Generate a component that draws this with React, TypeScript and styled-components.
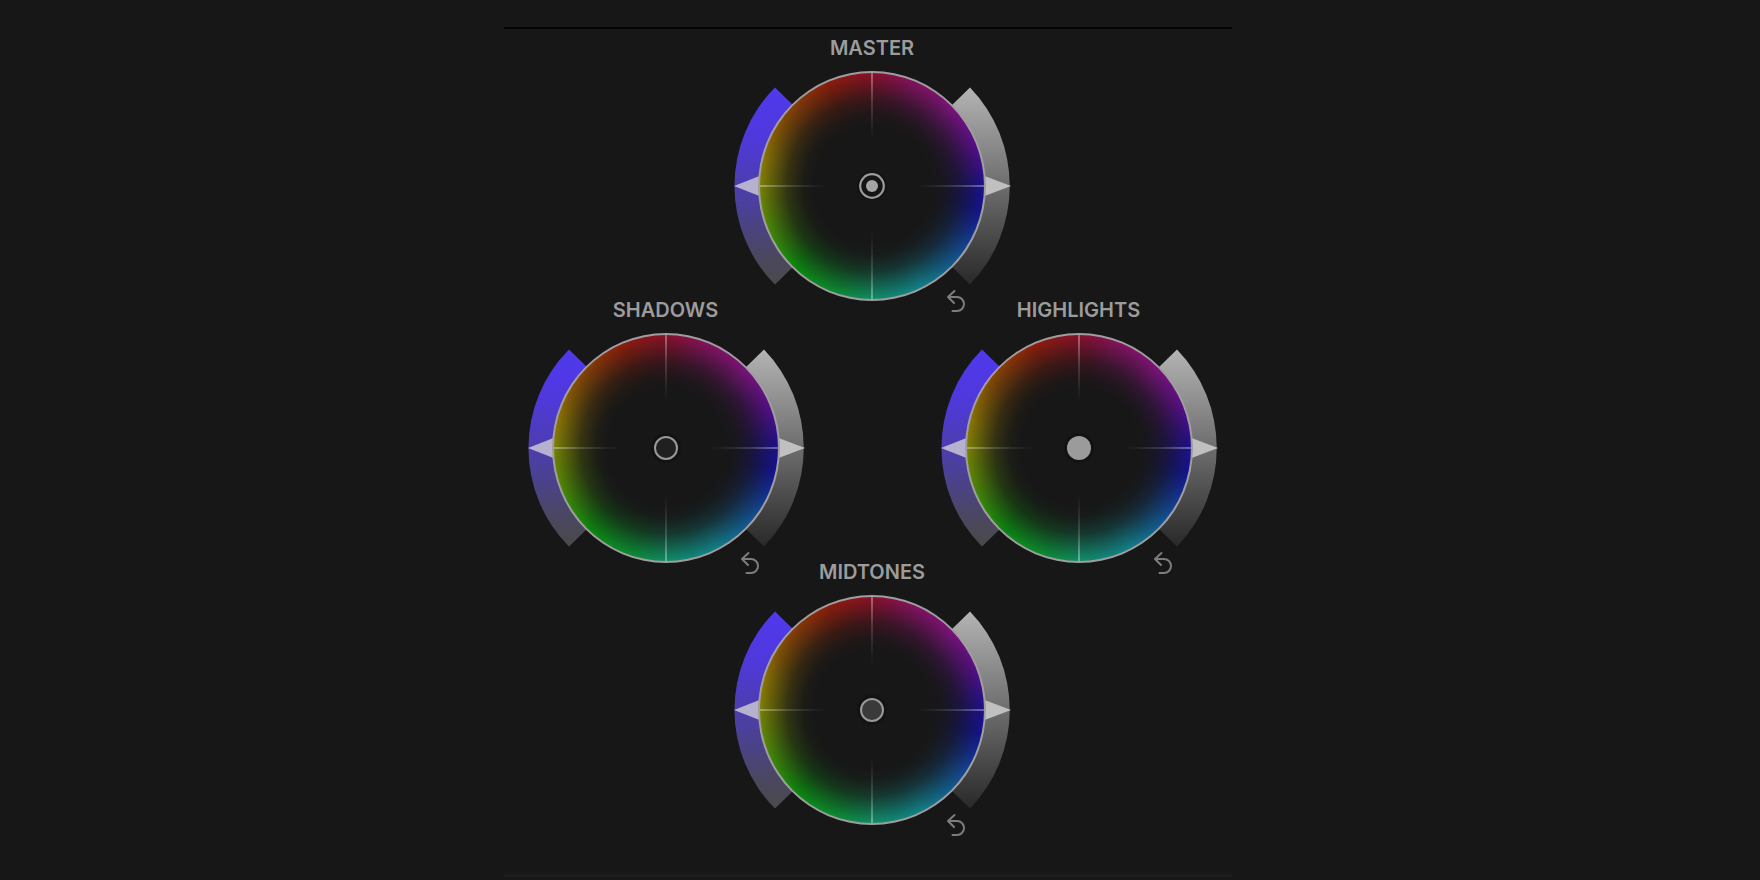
import React from 'react';
import styled, { createGlobalStyle } from 'styled-components';

type Marker = 'target' | 'ring' | 'filled' | 'mid';
type Area = 'master' | 'shadows' | 'highlights' | 'midtones';

const GlobalStyle = createGlobalStyle`
  * { box-sizing: border-box; }
  body {
    margin: 0;
    background: #171717;
    color: #9c9c9c;
    font-family: Inter, "Liberation Sans", sans-serif;
  }
`;

const Page = styled.main`
  display: flex;
  justify-content: center;
  min-height: 100vh;
  padding: 27px 24px 3px 0;
`;

const Panel = styled.div`
  display: flex;
  flex-direction: column;
  width: 100%;
  max-width: 728px;
  border-top: 2px solid #050505;
  border-bottom: 3px solid #1d1d1d;
`;

const WheelGrid = styled.div`
  display: grid;
  grid-template-columns: repeat(4, 1fr);
  grid-auto-rows: 262px;
  grid-template-areas:
    '. master master .'
    'shadows shadows highlights highlights'
    '. midtones midtones .';
  margin: 0 -53px 0 -45px;
  padding-top: 8px;
`;

const WheelCard = styled.section<{ $area: Area }>`
  grid-area: ${({ $area }) => $area};
  display: flex;
  flex-direction: column;
  align-items: center;
`;

const WheelTitle = styled.h2`
  margin: 0;
  font-size: 20px;
  font-weight: 600;
  line-height: 22px;
`;

const WheelBody = styled.div`
  position: relative;
  flex: none;
  width: 280px;
  height: 236px;
  margin-top: 10px;
`;

const HueDisc = styled.div`
  position: absolute;
  inset: 2px 26px 4px;
  border: 2px solid #a09d9e;
  border-radius: 50%;
  background:
    radial-gradient(closest-side, #171717 52%, rgba(23, 23, 23, 0.95) 62%, rgba(23, 23, 23, 0.74) 76%, rgba(23, 23, 23, 0.42) 88%, rgba(23, 23, 23, 0.1) 100%),
    conic-gradient(#95102b 0deg, #8f1163 20deg, #861288 46deg, #5e0e95 68deg, #210f98 88deg, #12129c 102deg, #1250a0 126deg, #118b97 153deg, #109b74 178deg, #0a9938 198deg, #0b950d 223deg, #5b9305 252deg, #8b8b02 272deg, #978002 284deg, #914f03 308deg, #9a1d0b 337deg, #95102b 360deg);
`;

const Overlay = styled.svg`
  position: absolute;
  inset: 0;
  width: 100%;
  height: 100%;
`;

const ResetButton = styled.button`
  position: absolute;
  right: 44px;
  bottom: -8px;
  display: flex;
  padding: 0;
  border: 0;
  background: none;
  color: #7d7d7d;
  cursor: pointer;
`;

function MarkerShape({ kind }: { kind: Marker }) {
  return (
    <g>
      <circle cx="140" cy="117" r="15" fill="#111" opacity="0.7" />
      {kind === 'target' && (
        <>
          <circle cx="140" cy="117" r="11.8" fill="#141414" stroke="#9c9c9c" strokeWidth="2.2" />
          <circle cx="140" cy="117" r="6" fill="#a5a5a5" />
        </>
      )}
      {kind === 'ring' && <circle cx="140" cy="117" r="11" fill="#202020" stroke="#999" strokeWidth="2" />}
      {kind === 'mid' && <circle cx="140" cy="117" r="11" fill="#3a3a3a" stroke="#999" strokeWidth="2" />}
      {kind === 'filled' && <circle cx="140" cy="117" r="12" fill="#9b9b9b" />}
    </g>
  );
}

function ColorWheel({ area, title, marker }: { area: Area; title: string; marker: Marker }) {
  const id = (name: string) => `${area}-${name}`;
  return (
    <WheelCard $area={area} aria-labelledby={id('title')}>
      <WheelTitle id={id('title')}>{title}</WheelTitle>
      <WheelBody>
        <Overlay viewBox="0 0 280 236" aria-hidden="true">
          <defs>
            <linearGradient id={id('sat')} x1="0" y1="0" x2="0" y2="1">
              <stop offset="0" stopColor="#4f39ed" />
              <stop offset="0.25" stopColor="#4f38dc" />
              <stop offset="0.6" stopColor="#4b409b" />
              <stop offset="0.85" stopColor="#4a4760" />
              <stop offset="1" stopColor="#4a4a4a" />
            </linearGradient>
            <linearGradient id={id('lum')} x1="0" y1="0" x2="0" y2="1">
              <stop offset="0" stopColor="#b4b4b4" />
              <stop offset="0.5" stopColor="#6d6d6d" />
              <stop offset="1" stopColor="#292929" />
            </linearGradient>
          </defs>
          <path d="M43 18.5 A136.5 138.500 0 0 0 43 215.5 L63 196 A113 115 0 0 1 63 38 Z" fill={`url(#${id('sat')})`} />
          <path d="M238 18.5 A138.500 140.500 0 0 1 238 215.5 L218 196 A113 115 0 0 0 218 38 Z" fill={`url(#${id('lum')})`} />
          <path d="M2 117 L30 106 V128 Z" fill="#b7b1d0" />
          <path d="M279 117 L250 106 V128 Z" fill="#c0c0c0" />
        </Overlay>
        <HueDisc />
        <Overlay viewBox="0 0 280 236" aria-hidden="true">
          <defs>
            <radialGradient id={id('hair')} gradientUnits="userSpaceOnUse" cx="140" cy="117" r="114">
              <stop offset="0.4" stopColor="#fff" stopOpacity="0" />
              <stop offset="0.75" stopColor="#fff" stopOpacity="0.16" />
              <stop offset="1" stopColor="#fff" stopOpacity="0.36" />
            </radialGradient>
          </defs>
          <path d="M139 4h2v226h-2zM28 116h224v2H28z" fill={`url(#${id('hair')})`} />
          <MarkerShape kind={marker} />
        </Overlay>
        <ResetButton type="button" aria-label={`Reset ${title.toLowerCase()}`}>
          <svg width="22" height="24" viewBox="0 0 22 24" fill="none" stroke="currentColor" strokeWidth="2" strokeLinecap="round" strokeLinejoin="round">
            <path d="M8.5 2 L2 8 L8 14 M2.5 8 H11 A7 7 0 0 1 11 22 H6.500" />
          </svg>
        </ResetButton>
      </WheelBody>
    </WheelCard>
  );
}

export default function App() {
  return (
    <>
      <GlobalStyle />
      <Page>
        <Panel>
          <WheelGrid>
            <ColorWheel area="master" title="MASTER" marker="target" />
            <ColorWheel area="shadows" title="SHADOWS" marker="ring" />
            <ColorWheel area="highlights" title="HIGHLIGHTS" marker="filled" />
            <ColorWheel area="midtones" title="MIDTONES" marker="mid" />
          </WheelGrid>
        </Panel>
      </Page>
    </>
  );
}
